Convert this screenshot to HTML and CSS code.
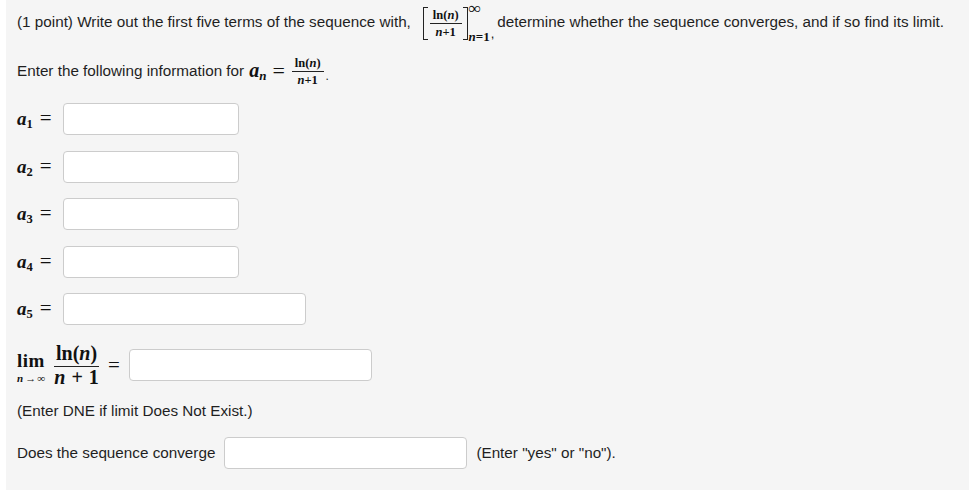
FILE: index.html
```html
<!DOCTYPE html>
<html>
<head>
<meta charset="utf-8">
<link rel="stylesheet" href="styles.css">
</head>
<body>
<div class="page">
  <div class="line intro">
    <span class="txt">(1 point) Write out the first five terms of the sequence with,</span>
    <span class="seq">
      <span class="brk brk-l"></span>
      <span class="frac sm">
        <span class="num">ln(<i>n</i>)</span>
        <span class="den"><i>n</i>+1</span>
      </span>
      <span class="brk brk-r"></span>
      <span class="lims">
        <span class="inf">∞</span>
        <span class="from"><i>n</i>=1</span>
      </span>
      <span class="comma">,</span>
    </span>
    <span class="txt rest">determine whether the sequence converges, and if so find its limit.</span>
  </div>

  <div class="line info">
    <span class="txt">Enter the following information for</span>
    <span class="m an"><i>a</i><sub><i>n</i></sub></span>
    <span class="m eq">=</span>
    <span class="frac sm">
      <span class="num">ln(<i>n</i>)</span>
      <span class="den"><i>n</i>+1</span>
    </span>
    <span class="dot">.</span>
  </div>

  <div class="row">
    <span class="lbl"><i>a</i><sub>1</sub><span class="eq2">=</span></span>
    <input class="box w-short" type="text">
  </div>
  <div class="row">
    <span class="lbl"><i>a</i><sub>2</sub><span class="eq2">=</span></span>
    <input class="box w-short" type="text">
  </div>
  <div class="row">
    <span class="lbl"><i>a</i><sub>3</sub><span class="eq2">=</span></span>
    <input class="box w-short" type="text">
  </div>
  <div class="row">
    <span class="lbl"><i>a</i><sub>4</sub><span class="eq2">=</span></span>
    <input class="box w-short" type="text">
  </div>
  <div class="row">
    <span class="lbl"><i>a</i><sub>5</sub><span class="eq2">=</span></span>
    <input class="box w-long" type="text">
  </div>

  <div class="row limrow">
    <span class="lim">
      <span class="limword">lim</span>
      <span class="limsub"><i>n</i><span class="arr">→</span>∞</span>
    </span>
    <span class="frac big">
      <span class="num">ln(<i>n</i>)</span>
      <span class="den"><i>n</i> + 1</span>
    </span>
    <span class="eq3">=</span>
    <input class="box w-long" type="text">
  </div>

  <p class="note">(Enter DNE if limit Does Not Exist.)</p>

  <div class="row conv">
    <span class="txt">Does the sequence converge</span>
    <input class="box w-long" type="text">
    <span class="txt">(Enter "yes" or "no").</span>
  </div>
</div>
</body>
</html>
```

FILE: styles.css
```css
html, body {
  margin: 0;
  padding: 0;
  background: #ffffff;
}
.page {
  margin-left: 6px;
  height: 490px;
  background: #f5f5f5;
  padding-left: 11px;
  box-sizing: border-box;
  font-family: "Liberation Sans", Arial, sans-serif;
  font-size: 15.25px;
  color: #1f1f1f;
  overflow: hidden;
}
.line {
  display: flex;
  align-items: center;
  white-space: nowrap;
}
.intro {
  height: 36px;
  padding-top: 4px;
}
.info {
  height: 32px;
  margin-top: 15px;
}
.txt {
  line-height: 18px;
}
.rest {
  margin-left: 3px;
}
.seq {
  display: inline-flex;
  align-items: stretch;
  height: 33px;
  margin-left: 12px;
  margin-top: 2px;
  font-family: "Liberation Serif", "Times New Roman", serif;
  color: #111;
}
.brk {
  width: 4px;
  border-top: 1.5px solid #222;
  border-bottom: 1.5px solid #222;
}
.brk-l { border-left: 1.5px solid #222; margin-right: 1px; }
.brk-r { border-right: 1.5px solid #222; margin-left: 0; }
.lims {
  display: flex;
  flex-direction: column;
  justify-content: space-between;
  margin-left: 1px;
  font-size: 13px;
  font-weight: bold;
}
.inf {
  font-size: 17px;
  line-height: 12px;
  margin-top: -4px;
}
.from {
  line-height: 12px;
  margin-bottom: -3px;
}
.comma {
  align-self: flex-end;
  font-family: "Liberation Sans", Arial, sans-serif;
  font-size: 13px;
  line-height: 16px;
  margin-left: 1px;
  margin-bottom: -2px;
}
.frac {
  display: inline-flex;
  flex-direction: column;
  align-items: center;
  justify-content: center;
  font-family: "Liberation Serif", "Times New Roman", serif;
  font-weight: bold;
  color: #111;
}
.frac.sm {
  font-size: 12.5px;
  padding: 0 1px;
}
.frac .num {
  padding: 0 3px 1px;
  border-bottom: 1px solid #222;
  line-height: 13px;
}
.frac .den {
  padding-top: 2px;
  line-height: 12px;
}
.m {
  font-family: "Liberation Serif", "Times New Roman", serif;
  font-weight: bold;
  color: #111;
}
.an {
  font-size: 20px;
  margin-left: 5px;
}
.an sub {
  font-size: 13px;
  vertical-align: -3px;
}
.eq {
  font-size: 22px;
  font-weight: normal;
  margin: 0 6px 0 6px;
}
.dot {
  align-self: center;
  margin-top: 10px;
  font-size: 12px;
  margin-left: 1px;
}
.row {
  display: flex;
  align-items: center;
  height: 32px;
  margin-top: 15.5px;
}
.info + .row {
  margin-top: 16px;
}
.lbl {
  width: 46px;
  font-family: "Liberation Serif", "Times New Roman", serif;
  font-size: 19px;
  font-weight: bold;
  color: #111;
  white-space: nowrap;
}
.lbl sub {
  font-size: 12.5px;
  vertical-align: -3px;
}
.eq2 {
  font-weight: normal;
  font-size: 21px;
  margin-left: 7px;
}
.box {
  box-sizing: border-box;
  height: 32px;
  margin: 0;
  padding: 0 6px;
  border: 1px solid #cccccc;
  border-radius: 4px;
  background: #ffffff;
  outline: none;
}
.w-short { width: 176px; }
.w-long { width: 243px; }
.limrow {
  height: 42px;
  margin-top: 19px;
}
.lim {
  display: inline-flex;
  flex-direction: column;
  align-items: center;
  align-self: flex-end;
  margin-bottom: 1px;
  font-family: "Liberation Serif", "Times New Roman", serif;
  font-weight: bold;
  color: #111;
}
.limword {
  font-size: 19px;
  line-height: 22px;
  letter-spacing: 0.5px;
}
.limsub {
  font-size: 11px;
  line-height: 13px;
  white-space: nowrap;
}
.arr {
  display: inline-block;
  margin: 0 1px 0 2px;
}
.frac.big {
  font-size: 20px;
  margin-left: 9px;
}
.frac.big .num {
  line-height: 19px;
  padding: 0 2px 3px;
}
.frac.big .den {
  line-height: 18px;
  padding-top: 1px;
  word-spacing: 1px;
}
.eq3 {
  font-family: "Liberation Serif", "Times New Roman", serif;
  font-size: 21px;
  margin: 0 9px 0 9px;
  color: #111;
}
.note {
  margin: 16px 0 0;
  line-height: 18px;
}
.conv {
  margin-top: 17px;
}
.conv .box {
  margin: 0 9px 0 9px;
}
```
